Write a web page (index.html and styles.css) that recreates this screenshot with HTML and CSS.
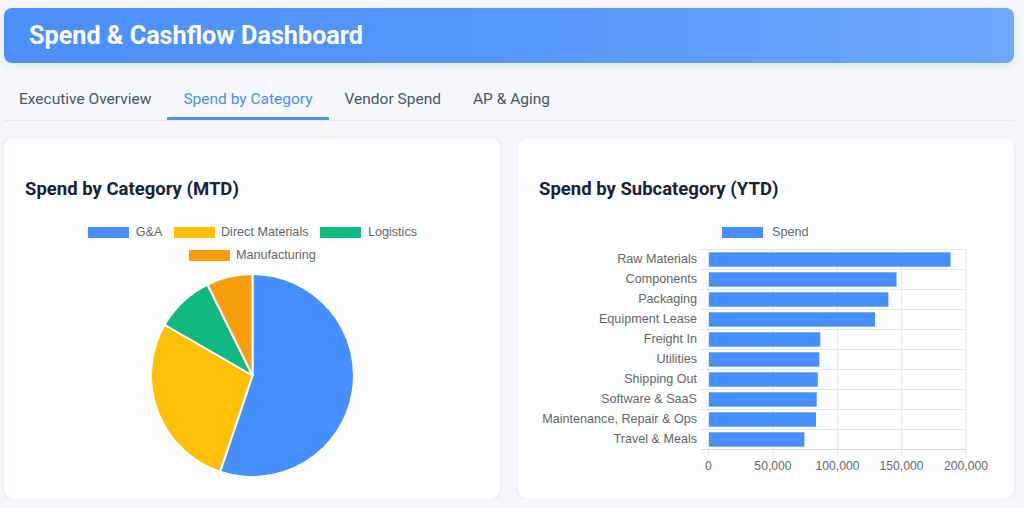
FILE: index.html
```html
<!DOCTYPE html>
<html lang="en">
<head>
	<meta charset="UTF-8">
	<title>Spend &amp; Cashflow Dashboard</title>
	<link rel="stylesheet" href="styles.css">
</head>
<body>
	<div class="header">
		<h1>Spend &amp; Cashflow Dashboard</h1>
	</div>
	<ul class="tabs">
		<li>Executive Overview</li>
		<li class="active">Spend by Category</li>
		<li>Vendor Spend</li>
		<li>AP &amp; Aging</li>
	</ul>
	<div class="cards">
		<div class="card">
			<h2>Spend by Category (MTD)</h2>
			<svg class="chart" width="454" height="270" viewBox="0 0 454 270">
				<!-- legend -->
				<rect class="lg-blue" x="63.5" y="11.5" width="40" height="10"/>
				<text x="110.7" y="20.4">G&amp;A</text>
				<rect class="lg-yellow" x="149.5" y="11.5" width="40" height="10"/>
				<text x="196" y="20.4">Direct Materials</text>
				<rect class="lg-green" x="295.5" y="11.5" width="40" height="10"/>
				<text x="343" y="20.4">Logistics</text>
				<rect class="lg-orange" x="164.5" y="34.5" width="40" height="10"/>
				<text x="211" y="43.4">Manufacturing</text>
				<!-- pie -->
				<path class="sl-blue" d="M227.5 159.5 L227.5 58 A101.5 101.5 0 1 1 195.1 255.7 Z"/>
				<path class="sl-yellow" d="M227.5 159.5 L195.1 255.7 A101.5 101.5 0 0 1 139.6 108.75 Z"/>
				<path class="sl-green" d="M227.5 159.5 L139.6 108.75 A101.5 101.5 0 0 1 182.5 68.5 Z"/>
				<path class="sl-orange" d="M227.5 159.5 L182.5 68.5 A101.5 101.5 0 0 1 227.5 58 Z"/>
			</svg>
		</div>
		<div class="card">
			<h2>Spend by Subcategory (YTD)</h2>
			<svg class="chart" width="454" height="270" viewBox="0 0 454 270">
				<rect class="lg-blue" x="183.5" y="11.5" width="40" height="10"/>
				<text x="233" y="20.4">Spend</text>
				<!-- grid -->
				<g class="grid">
					<line x1="161" y1="33.5" x2="427" y2="33.5"/>
					<line x1="161" y1="53.5" x2="427" y2="53.5"/>
					<line x1="161" y1="73.5" x2="427" y2="73.5"/>
					<line x1="161" y1="93.5" x2="427" y2="93.5"/>
					<line x1="161" y1="113.5" x2="427" y2="113.5"/>
					<line x1="161" y1="133.5" x2="427" y2="133.5"/>
					<line x1="161" y1="153.5" x2="427" y2="153.5"/>
					<line x1="161" y1="173.5" x2="427" y2="173.5"/>
					<line x1="161" y1="193.5" x2="427" y2="193.5"/>
					<line x1="161" y1="213.5" x2="427" y2="213.5"/>
					<line x1="169.5" y1="33" x2="169.5" y2="238"/>
					<line x1="234" y1="33" x2="234" y2="238"/>
					<line x1="298.5" y1="33" x2="298.5" y2="238"/>
					<line x1="362.5" y1="33" x2="362.5" y2="238"/>
					<line x1="427" y1="33" x2="427" y2="238"/>
				</g>
				<line class="axis" x1="161" y1="233.5" x2="427" y2="233.5"/>
				<!-- bars -->
				<g class="bars">
					<rect x="170" y="36.3" width="241.5" height="14.4"/>
					<rect x="170" y="56.3" width="187.5" height="14.4"/>
					<rect x="170" y="76.3" width="179.4" height="14.4"/>
					<rect x="170" y="96.3" width="166" height="14.4"/>
					<rect x="170" y="116.3" width="111.3" height="14.4"/>
					<rect x="170" y="136.3" width="110.3" height="14.4"/>
					<rect x="170" y="156.3" width="108.8" height="14.4"/>
					<rect x="170" y="176.3" width="107.7" height="14.4"/>
					<rect x="170" y="196.3" width="107" height="14.4"/>
					<rect x="170" y="216.3" width="95.4" height="14.4"/>
				</g>
				<g class="ylabels">
					<text x="158" y="47.3">Raw Materials</text>
					<text x="158" y="67.3">Components</text>
					<text x="158" y="87.3">Packaging</text>
					<text x="158" y="107.3">Equipment Lease</text>
					<text x="158" y="127.3">Freight In</text>
					<text x="158" y="147.3">Utilities</text>
					<text x="158" y="167.3">Shipping Out</text>
					<text x="158" y="187.3">Software &amp; SaaS</text>
					<text x="158" y="207.3">Maintenance, Repair &amp; Ops</text>
					<text x="158" y="227.3">Travel &amp; Meals</text>
				</g>
				<g class="xlabels">
					<text x="169.5" y="254.3">0</text>
					<text x="234" y="254.3">50,000</text>
					<text x="298.5" y="254.3">100,000</text>
					<text x="362.5" y="254.3">150,000</text>
					<text x="427" y="254.3">200,000</text>
				</g>
			</svg>
		</div>
	</div>
</body>
</html>
```

FILE: styles.css
```css
*{
	margin: 0;
	padding: 0;
	box-sizing: border-box;
}
body{
	background: #f5f7fb;
	font-family: Roboto, "Liberation Sans", sans-serif;
	padding: 8px 10px 0 4px;
}
ul{
	list-style-type: none;
}
.header{
	height: 55px;
	display: flex;
	align-items: center;
	padding: 0 25px;
	border-radius: 8px;
	background: linear-gradient(90deg, #4d8ff8 0%, #5396fa 45%, #6ca8fe 100%);
	box-shadow: 0 3px 8px rgba(60, 90, 140, 0.10);
}
.header h1{
	color: #fff;
	font-size: 25.2px;
	font-weight: 700;
	line-height: 30px;
}
.tabs{
	display: flex;
	margin-top: 16px;
	border-bottom: 1px solid #e6e9ef;
}
.tabs li{
	padding: 10px 16px 8px;
	font-size: 15.5px;
	line-height: 20px;
	color: #4b5563;
	border-bottom: 3px solid transparent;
}
.tabs li:first-child{
	margin-left: -1px;
}
.tabs li.active{
	color: #4a8ff5;
	border-bottom-color: #4a8ff5;
}
.cards{
	display: grid;
	grid-template-columns: 1fr 1fr;
	gap: 18px;
	margin-top: 17px;
}
.card{
	height: 361px;
	background: #fdfeff;
	border-radius: 10px;
	padding: 39px 21px 0;
	box-shadow: 0 1px 5px rgba(40, 60, 100, 0.09);
}
.card h2{
	font-size: 18.5px;
	font-weight: 700;
	line-height: 24px;
	color: #1a2234;
	margin-bottom: 15px;
}
.chart{
	display: block;
}
.chart text{
	font-family: "Liberation Sans", Arial, sans-serif;
	font-size: 12.6px;
	fill: #666;
}
.xlabels text{
	font-size: 12.2px;
}
.lg-blue{ fill: #4a8ff9; stroke: #4a8ff9; }
.lg-yellow{ fill: #ffc107; stroke: #ffc107; }
.lg-green{ fill: #10b981; stroke: #10b981; }
.lg-orange{ fill: #f59e0b; stroke: #f59e0b; }
.sl-blue, .sl-yellow, .sl-green, .sl-orange{
	stroke: #fff;
	stroke-width: 2;
	stroke-linejoin: round;
}
.sl-blue{ fill: #478ffc; }
.sl-yellow{ fill: #ffc107; }
.sl-green{ fill: #10b981; }
.sl-orange{ fill: #f59e0b; }
.grid line{
	stroke: #e6e6e6;
	stroke-width: 1;
}
.axis{
	stroke: #d9d9d9;
	stroke-width: 1;
}
.bars rect{
	fill: #478ffc;
}
.ylabels text{
	text-anchor: end;
}
.xlabels text{
	text-anchor: middle;
}
```
